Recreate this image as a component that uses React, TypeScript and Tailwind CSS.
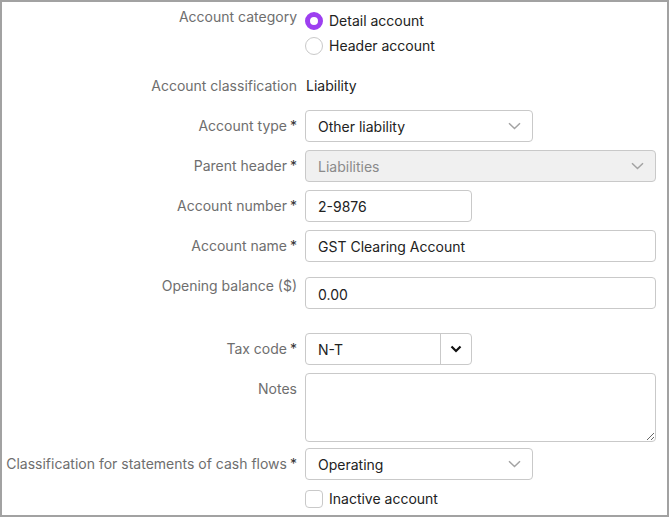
import React from 'react';

// Account detail form: label column on the left, controls on the right.

const labelCls =
  'w-[289px] shrink-0 flex justify-end whitespace-nowrap leading-5 text-[#6e6e6e]';
const boxCls =
  'h-8 rounded-[4px] border border-[#c9c9c9] px-3 flex items-center';

function Req() {
  return <span className="ml-[3px] text-[#333]">*</span>;
}

function Chevron({ className = '' }: { className?: string }) {
  return (
    <svg width="13" height="8" viewBox="0 0 13 8" className={className}>
      <path d="M1 1.2 L6.5 6.5 L12 1.2" fill="none" stroke="currentColor" strokeWidth="1.5" />
    </svg>
  );
}

function Select({ value, width, disabled }: { value: string; width: string; disabled?: boolean }) {
  return (
    <div
      className={`${boxCls} ${width} justify-between ${
        disabled ? 'bg-[#f0f0f0] text-[#8a8a8a]' : 'bg-white text-[#222]'
      }`}
    >
      <span>{value}</span>
      <Chevron className="text-[#a3a3a3] mr-[-1px]" />
    </div>
  );
}

export default function App() {
  return (
    <div
      className="w-[669px] h-[517px] border-2 border-[#a2a2a2] bg-white pl-[6px] pt-[6px] text-[14px]"
      style={{ fontFamily: 'Inter, "Noto Sans", sans-serif' }}
    >
      {/* Account category */}
      <div className="flex gap-2">
        <div className={`${labelCls} mt-[-1px]`}>Account category</div>
        <div className="flex flex-col">
          <label className="h-[25px] flex items-center gap-[6px] text-[#222]">
            <span className="w-[18px] h-[18px] rounded-full border-[5px] border-[#9d3ff0] bg-white" />
            Detail account
          </label>
          <label className="h-[25px] flex items-center gap-[6px] text-[#222]">
            <span className="w-[18px] h-[18px] rounded-full border border-[#c9c9c9] bg-white" />
            Header account
          </label>
        </div>
      </div>

      <div className="flex gap-2 mt-[18px]">
        <div className={labelCls}>Account classification</div>
        <div className="leading-5 text-[#222] ml-[1px]">Liability</div>
      </div>

      <div className="flex gap-2 items-center mt-[14px]">
        <div className={labelCls}>
          Account type
          <Req />
        </div>
        <Select value="Other liability" width="w-[228px]" />
      </div>

      <div className="flex gap-2 items-center mt-2">
        <div className={labelCls}>
          Parent header
          <Req />
        </div>
        <Select value="Liabilities" width="w-[351px]" disabled />
      </div>

      <div className="flex gap-2 items-center mt-2">
        <div className={labelCls}>
          Account number
          <Req />
        </div>
        <div className={`${boxCls} bg-white text-[#222] w-[167px]`}>2-9876</div>
      </div>

      <div className="flex gap-2 items-center mt-2">
        <div className={labelCls}>
          Account name
          <Req />
        </div>
        <div className={`${boxCls} bg-white text-[#222] w-[351px]`}>GST Clearing Account</div>
      </div>

      <div className="flex gap-2 items-start mt-[15px]">
        <div className={`${labelCls} mt-[-1px]`}>Opening balance ($)</div>
        <div className={`${boxCls} bg-white text-[#222] w-[351px] pt-[3px]`}>0.00</div>
      </div>

      <div className="flex gap-2 items-center mt-6">
        <div className={labelCls}>
          Tax code
          <Req />
        </div>
        <div className="h-8 w-[167px] rounded-[4px] border border-[#c9c9c9] bg-white flex text-[#222]">
          <div className="flex-1 flex items-center px-3 border-r border-[#c9c9c9]">N-T</div>
          <div className="w-[30px] flex items-center justify-center">
            <svg width="12" height="8" viewBox="0 0 12 8">
              <path d="M1.5 1.5 L6 6 L10.5 1.5" fill="none" stroke="#111" strokeWidth="2.2" />
            </svg>
          </div>
        </div>
      </div>

      <div className="flex gap-2 items-start mt-2">
        <div className={`${labelCls} pt-[6px]`}>Notes</div>
        <textarea className="w-[351px] h-[69px] rounded-[4px] border border-[#c9c9c9] bg-white outline-none" />
      </div>

      <div className="flex gap-2 items-center mt-[6px]">
        <div className={labelCls}>
          Classification for statements of cash flows
          <Req />
        </div>
        <Select value="Operating" width="w-[228px]" />
      </div>

      <div className="flex gap-2 items-center mt-[9px]">
        <div className="w-[289px] shrink-0" />
        <label className="flex items-center gap-[6px] text-[#222] leading-5">
          <span className="w-[18px] h-[18px] rounded-[4px] border border-[#c9c9c9] bg-white" />
          Inactive account
        </label>
      </div>
    </div>
  );
}
